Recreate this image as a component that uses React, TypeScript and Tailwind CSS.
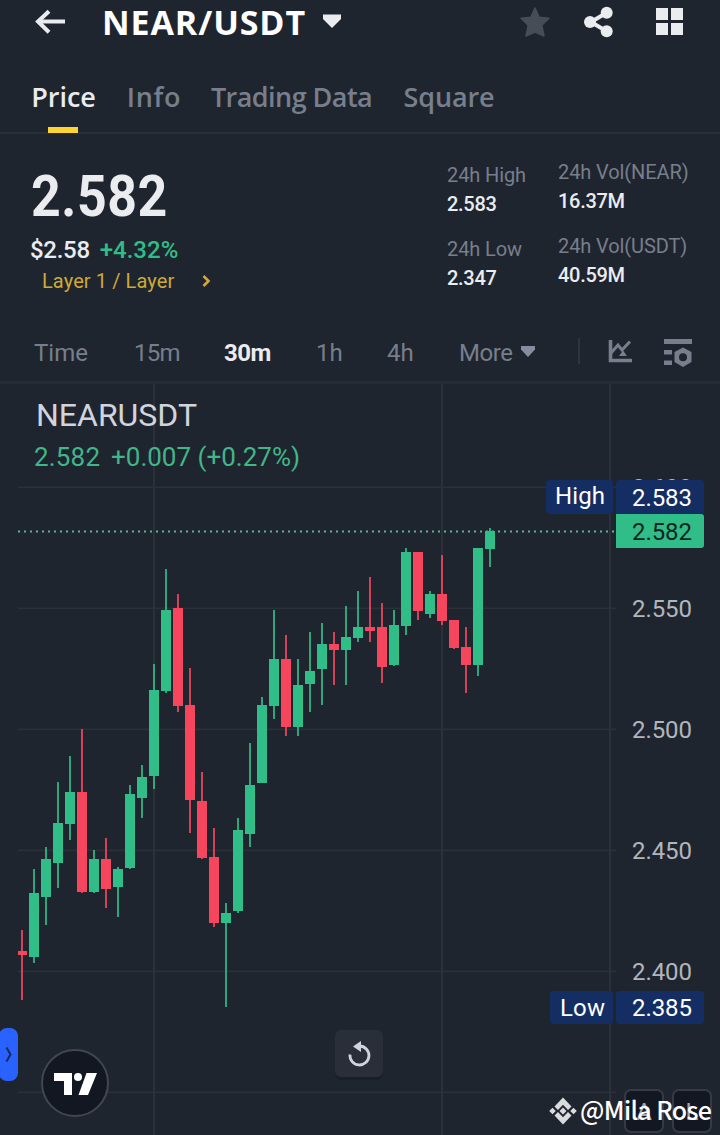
import { useState } from 'react';
import clsx from 'clsx';

const TABS = [
  { label: 'Price', className: 'w-[65px] mr-[31px] tracking-[0px]' },
  { label: 'Info', className: 'w-[54px] mr-[30px] tracking-[0.7px]' },
  { label: 'Trading Data', className: 'w-[161px] mr-[31px] tracking-[-0.55px]' },
  { label: 'Square', className: 'w-[92px] tracking-[-0.1px]' },
];

const INTERVALS = [
  { label: 'Time', className: 'w-[100px]' },
  { label: '15m', className: 'w-[90px] tracking-[-0.8px]' },
  { label: '30m', className: 'w-[92px]' },
  { label: '1h', className: 'w-[71px]' },
  { label: '4h', className: 'w-[72px]' },
];

const STATS = [
  {
    className: 'w-[111px] pt-[27px]',
    items: [
      { label: '24h High', value: '2.583' },
      { label: '24h Low', value: '2.347' },
    ],
  },
  {
    className: 'w-[162px] pt-[24px]',
    items: [
      { label: '24h Vol(NEAR)', value: '16.37M' },
      { label: '24h Vol(USDT)', value: '40.59M' },
    ],
  },
];

const UP = '#31bd87';
const DOWN = '#f6465d';

// [high, body top, body bottom, low, is up]
const CANDLES: [number, number, number, number, number][] = [
  [930, 951, 955, 1000, 0],
  [869, 893, 957, 963, 1],
  [847, 859, 897, 925, 1],
  [782, 823, 863, 888, 1],
  [756, 792, 824, 840, 1],
  [729, 792, 892, 893, 0],
  [850, 859, 892, 893, 1],
  [838, 859, 889, 908, 0],
  [867, 869, 887, 917, 1],
  [785, 794, 868, 869, 1],
  [765, 777, 798, 818, 1],
  [664, 690, 776, 789, 1],
  [569, 610, 691, 693, 1],
  [594, 608, 706, 712, 0],
  [668, 705, 800, 833, 0],
  [772, 801, 858, 859, 0],
  [828, 857, 923, 927, 0],
  [903, 913, 923, 1007, 1],
  [818, 830, 911, 913, 1],
  [743, 785, 834, 847, 1],
  [697, 705, 783, 783, 1],
  [610, 659, 706, 719, 1],
  [635, 659, 727, 736, 0],
  [659, 685, 727, 736, 1],
  [632, 671, 684, 712, 1],
  [623, 644, 669, 705, 1],
  [632, 644, 650, 685, 0],
  [606, 637, 650, 685, 1],
  [591, 627, 638, 642, 1],
  [577, 627, 631, 642, 0],
  [603, 627, 667, 683, 0],
  [610, 625, 665, 666, 1],
  [548, 552, 626, 635, 1],
  [552, 552, 611, 620, 0],
  [591, 594, 614, 618, 1],
  [555, 594, 621, 625, 0],
  [620, 620, 648, 649, 0],
  [627, 647, 665, 693, 0],
  [548, 548, 665, 676, 1],
  [528, 531, 549, 567, 1],
];

const PRICE_LINES = [
  { y: 487, label: '2.600' },
  { y: 608, label: '2.550' },
  { y: 729, label: '2.500' },
  { y: 850, label: '2.450' },
  { y: 971, label: '2.400' },
  { y: 1092, label: null },
];

function Header() {
  return (
    <header className="flex h-[44px] items-center">
      <svg className="ml-[34px] h-[28px] w-[32px]" viewBox="0 0 32 28" fill="none" stroke="#eaecef" strokeWidth="4">
        <path d="M15 3.2 4 13.5 15 24.2" />
        <path d="M4 13.5H31" />
      </svg>
      <h1 className="ml-[36px] w-[204px] whitespace-nowrap font-['Open_Sans'] text-[34px] leading-[44px] font-bold tracking-[0.9px] text-white">
        NEAR/USDT
      </h1>
      <svg className="mt-[-1px] ml-[16px] h-[15px] w-[20px]" viewBox="0 0 20 15" fill="#eaecef">
        <path d="M1 .5H19V5L10 14 1 5Z" />
      </svg>
      <svg className="mt-[-1px] ml-[177px] h-[32px] w-[32px]" viewBox="0 0 32 32" fill="#474d57">
        <path
          d="M16 2 20.2 11.2 30 12.3 22.8 19.3 25 30 16 26 7 30 9.2 19.3 2 12.3 11.8 11.2Z"
          stroke="#474d57"
          strokeWidth="1.5"
          strokeLinejoin="round"
        />
      </svg>
      <svg className="mt-[-1px] ml-[32px] h-[32px] w-[32px]" viewBox="0 0 32 32" fill="#eaecef">
        <path d="M8 16 24 6.5M8 16 24 25.5" stroke="#eaecef" strokeWidth="4" />
        <circle cx="7" cy="16" r="6" />
        <circle cx="23.7" cy="6.8" r="6" />
        <circle cx="23.7" cy="25.2" r="6" />
      </svg>
      <div className="mt-[-1px] ml-[41px] grid grid-cols-[12px_12px] gap-[3px]">
        {[0, 1, 2, 3].map(i => (
          <span key={i} className="h-[12px] bg-[#eaecef]" />
        ))}
      </div>
    </header>
  );
}

function Tabs() {
  const [active, setActive] = useState('Price');

  return (
    <nav className="flex h-[90px] border-b-2 border-[#2a2f38] pt-[31px] pl-[31px]">
      {TABS.map(tab => (
        <button
          key={tab.label}
          onClick={() => setActive(tab.label)}
          className={clsx(
            "flex h-[58px] flex-col items-center justify-between whitespace-nowrap font-['Open_Sans'] text-[27px] leading-[44px] font-semibold",
            tab.className,
            active === tab.label ? 'text-[#eaecef]' : 'text-[#777f8c]'
          )}
        >
          {tab.label}
          {active === tab.label && <span className="mr-[1px] h-[6px] w-[30px] bg-[#fcd535]" />}
        </button>
      ))}
    </nav>
  );
}

function Summary() {
  return (
    <section className="flex h-[186px] font-[Roboto]">
      <div className="w-[447px] pt-[31px] pl-[31px]">
        <div className="origin-left scale-x-[0.91] text-[57px] leading-[64px] font-bold tracking-[0.6px] text-[#eaecef]">2.582</div>
        <div className="mt-[6px] flex gap-[10px] text-[24px] leading-[30px] font-medium">
          <span className="-ml-px tracking-[-0.3px] text-[#eaecef]">$2.58</span>
          <span className="text-[#31bd87]">+4.32%</span>
        </div>
        <div className="mt-[3px] flex items-center pl-[11px] text-[20px] leading-[26px] tracking-[0.1px] text-[#d0a935]">
          Layer 1 / Layer
          <svg className="ml-[28px] h-[12px] w-[9px]" viewBox="0 0 9 12" fill="none" stroke="#d0a935" strokeWidth="2.6">
            <path d="M1.5 1 6.5 6 1.5 11" />
          </svg>
        </div>
      </div>
      {STATS.map((column, i) => (
        <div key={i} className={clsx('flex flex-col gap-[16px]', column.className)}>
          {column.items.map(stat => (
            <div key={stat.label} className="text-[20px] leading-[29px] whitespace-nowrap">
              <div className="tracking-[-0.1px] text-[#777f8c]">{stat.label}</div>
              <div className="font-medium tracking-[-0.3px] text-[#eaecef]">{stat.value}</div>
            </div>
          ))}
        </div>
      ))}
    </section>
  );
}

function IntervalBar() {
  const [interval, setInterval] = useState('30m');

  return (
    <div className="flex h-[64px] items-center border-b-[3px] border-[#272c35] pl-[34px] font-[Roboto] text-[24px] text-[#777f8c]">
      {INTERVALS.map(item => (
        <button
          key={item.label}
          onClick={() => setInterval(item.label)}
          className={clsx(
            'mt-[4px] text-left',
            item.className,
            interval === item.label && 'font-bold tracking-[-0.5px] text-[#eaecef]'
          )}
        >
          {item.label}
        </button>
      ))}
      <button className="mt-[4px] flex w-[119px] items-center tracking-[-0.4px]">
        More
        <svg className="mt-[-3px] ml-[8px] h-[11px] w-[14px]" viewBox="0 0 14 11" fill="#848e9c">
          <path d="M0 0H14V3.5L7 11 0 3.5Z" />
        </svg>
      </button>
      <span className="h-[26px] w-[2px] bg-[#2f353f]" />
      <svg className="mt-[2px] ml-[28px] h-[25px] w-[25px]" viewBox="0 0 25 25" fill="none" stroke="#777f8c" strokeWidth="3">
        <path d="M2.5 1V21.5H24" strokeWidth="3.6" />
        <path d="M3 14 10 6 14 11 22 2.5" />
        <path d="M15 11.5 19 17H11Z" fill="#777f8c" stroke="none" />
      </svg>
      <svg className="mt-[4px] ml-[30px] h-[30px] w-[30px]" viewBox="0 0 30 30" fill="#777f8c">
        <path d="M1 1H29V6H1ZM1 12H9V16.5H1ZM1 22.5H9V27H1Z" />
        <path
          fillRule="evenodd"
          d="M20 9.5 28.5 14V24L20 29 11.5 24V14ZM20 15.2A4 4 0 1 0 20 23.2 4 4 0 1 0 20 15.2Z"
        />
      </svg>
    </div>
  );
}

function CandleChart() {
  return (
    <svg className="block h-[751px] w-[720px] font-[Roboto] text-[24px]" viewBox="0 384 720 751">
      {/* Grid */}
      <g fill="#2b3039">
        {PRICE_LINES.map(line => (
          <rect key={line.y} x="18" y={line.y - 0.5} width="598" height="1.6" />
        ))}
        {[153, 441, 609].map(x => (
          <rect key={x} x={x} y="384" width="2" height="751" />
        ))}
      </g>

      {/* Last price */}
      <path d="M18 531.5H616" stroke="#57b596" strokeWidth="2" strokeDasharray="2 4" />

      {CANDLES.map(([high, top, bottom, low, up], i) => {
        const x = 22 + i * 12;
        const left = i === 0 ? 18 : x - 5;
        return (
          <g key={i} fill={up ? UP : DOWN}>
            <rect x={x - 1} y={high} width="2" height={low - high} opacity="0.85" />
            <rect x={left} y={top} width={x + 5 - left} height={bottom - top} />
          </g>
        );
      })}

      {/* Price axis */}
      <g fill="#b2b5be">
        {PRICE_LINES.map(line => line.label && (
          <text key={line.y} x="632" y={line.y + 9} textLength="60">{line.label}</text>
        ))}
      </g>

      <g fill="#142d62">
        <rect x="546" y="480" width="67" height="34" rx="4" />
        <rect x="616" y="480" width="88" height="36" rx="3" />
        <rect x="550" y="991" width="63" height="33" rx="4" />
        <rect x="616" y="991" width="88" height="33" rx="3" />
      </g>
      <path d="M616 514H701Q704 514 704 517V545Q704 548 701 548H616Z" fill={UP} />
      <g fill="#fff">
        <text x="555" y="504" textLength="50">High</text>
        <text x="632" y="506" textLength="60">2.583</text>
        <text x="560" y="1016" textLength="45">Low</text>
        <text x="632" y="1016" textLength="60">2.385</text>
      </g>
      <text x="632" y="540" textLength="60" fill="#10251f">2.582</text>

      {/* Legend */}
      <text x="36" y="426" textLength="161" fontSize="32" fill="#d1d4dc">NEARUSDT</text>
      <text x="34" y="466" textLength="66" fontSize="26" fill="#41b688">2.582</text>
      <text x="111" y="466" textLength="189" fontSize="26" fill="#41b688">+0.007 (+0.27%)</text>

      {/* Drawing panel handle */}
      <rect x="-1" y="1028" width="19" height="53" rx="8" fill="#2962ff" />
      <path d="M6.5 1047.5 10.5 1054.5 6.5 1061.5" fill="none" stroke="#152a5c" strokeWidth="2" />

      {/* TradingView badge */}
      <circle cx="75" cy="1083" r="33" fill="#131722" stroke="#434651" strokeWidth="2" />
      <g fill="#fff">
        <path d="M54 1073H72V1095H64V1081H54Z" />
        <circle cx="78" cy="1077" r="4" />
        <path d="M86.5 1073H97L88 1095H78.5Z" />
      </g>

      {/* Reset view */}
      <rect x="335" y="1032" width="48" height="48" rx="6" fill="#171b23" opacity="0.6" />
      <rect x="335" y="1030" width="48" height="47" rx="6" fill="#2a2e39" />
      <path d="M350 1054.5A9.5 9.5 0 1 0 359.5 1046" fill="none" stroke="#d1d4dc" strokeWidth="2.8" />
      <path d="M353 1046.5 361 1041V1052Z" fill="#d1d4dc" />

      {/* Auto / log scale */}
      <g fill="#131722" stroke="#363a45" strokeWidth="2">
        <rect x="625" y="1090" width="38" height="42" rx="6" />
        <rect x="673" y="1090" width="38" height="42" rx="6" />
      </g>
      <g fill="#a3a6b0" textAnchor="middle">
        <text x="644" y="1119.5">A</text>
        <text x="692" y="1119.5">L</text>
      </g>

      {/* Author watermark */}
      <g fill="#d9dbdf">
        <path d="M554.5 1106.5 563 1097.5 571.5 1106.5 568 1110 563 1104.8 558 1110Z" />
        <path d="M554.5 1115.5 563 1124.5 571.5 1115.5 568 1112 563 1117.2 558 1112Z" />
        <path d="M563 1107.5 566.5 1111 563 1114.5 559.5 1111ZM552.5 1107.7 555.8 1111 552.5 1114.3 549.2 1111ZM573.5 1107.7 576.8 1111 573.5 1114.3 570.2 1111Z" />
      </g>
      <text
        x="580"
        y="1120"
        textLength="132"
        className="font-['Noto_Sans_CJK_SC',sans-serif]"
        fontSize="25"
        fontWeight="500"
        fill="#fff"
      >
        @Mila Rose
      </text>
    </svg>
  );
}

export default function App() {
  return (
    <main className="h-[1135px] w-[720px] overflow-hidden bg-[#1f252f]">
      <Header />
      <Tabs />
      <Summary />
      <IntervalBar />
      <CandleChart />
    </main>
  );
}
